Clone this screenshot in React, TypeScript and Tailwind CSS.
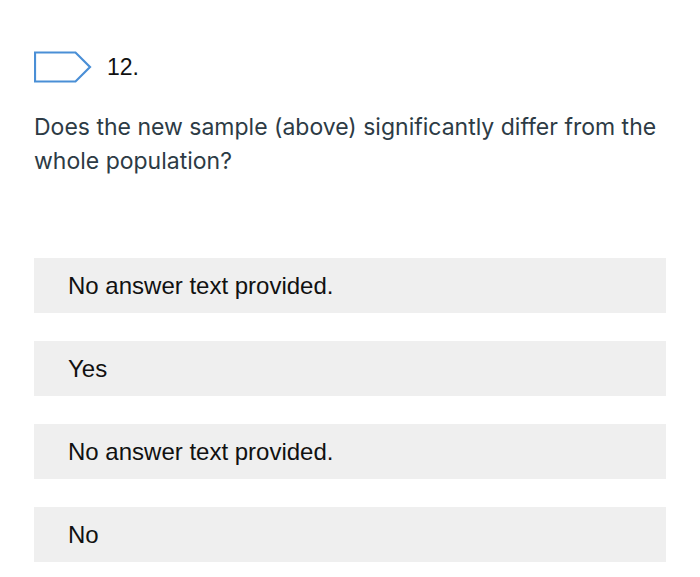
export default function App() {
  const answers = ["No answer text provided.", "Yes", "No answer text provided.", "No"];
  return (
    <div className="min-h-[577px] w-[700px] bg-white pl-[34px] pr-[34px] pt-[51px]" style={{ fontFamily: "Inter, 'Liberation Sans', sans-serif" }}>
      <div className="flex h-[32px] items-center gap-[15px]">
        <svg width="58" height="32" viewBox="0 0 58 32" className="shrink-0">
          <path d="M1 1.5 H41.5 L56 16 L41.5 30.5 H1 Z" fill="none" stroke="#4a8fd6" strokeWidth="2.2" strokeLinejoin="miter" />
        </svg>
        <span className="text-[23px] leading-none text-[#111]" style={{ fontFamily: "'Liberation Sans', sans-serif" }}>12.</span>
      </div>
      <p className="mt-[27px] text-[23px] leading-[34px] text-[#2d3b45]">
        Does the new sample (above) significantly differ from the whole population?
      </p>
      <div className="mt-[80px] flex flex-col gap-[28px]">
        {answers.map((a, i) => (
          <div key={i} className="flex h-[55px] items-center bg-[#efefef] pl-[34px]">
            <span className="text-[24px] text-[#111]" style={{ fontFamily: "'Liberation Sans', sans-serif" }}>{a}</span>
          </div>
        ))}
      </div>
    </div>
  );
}
